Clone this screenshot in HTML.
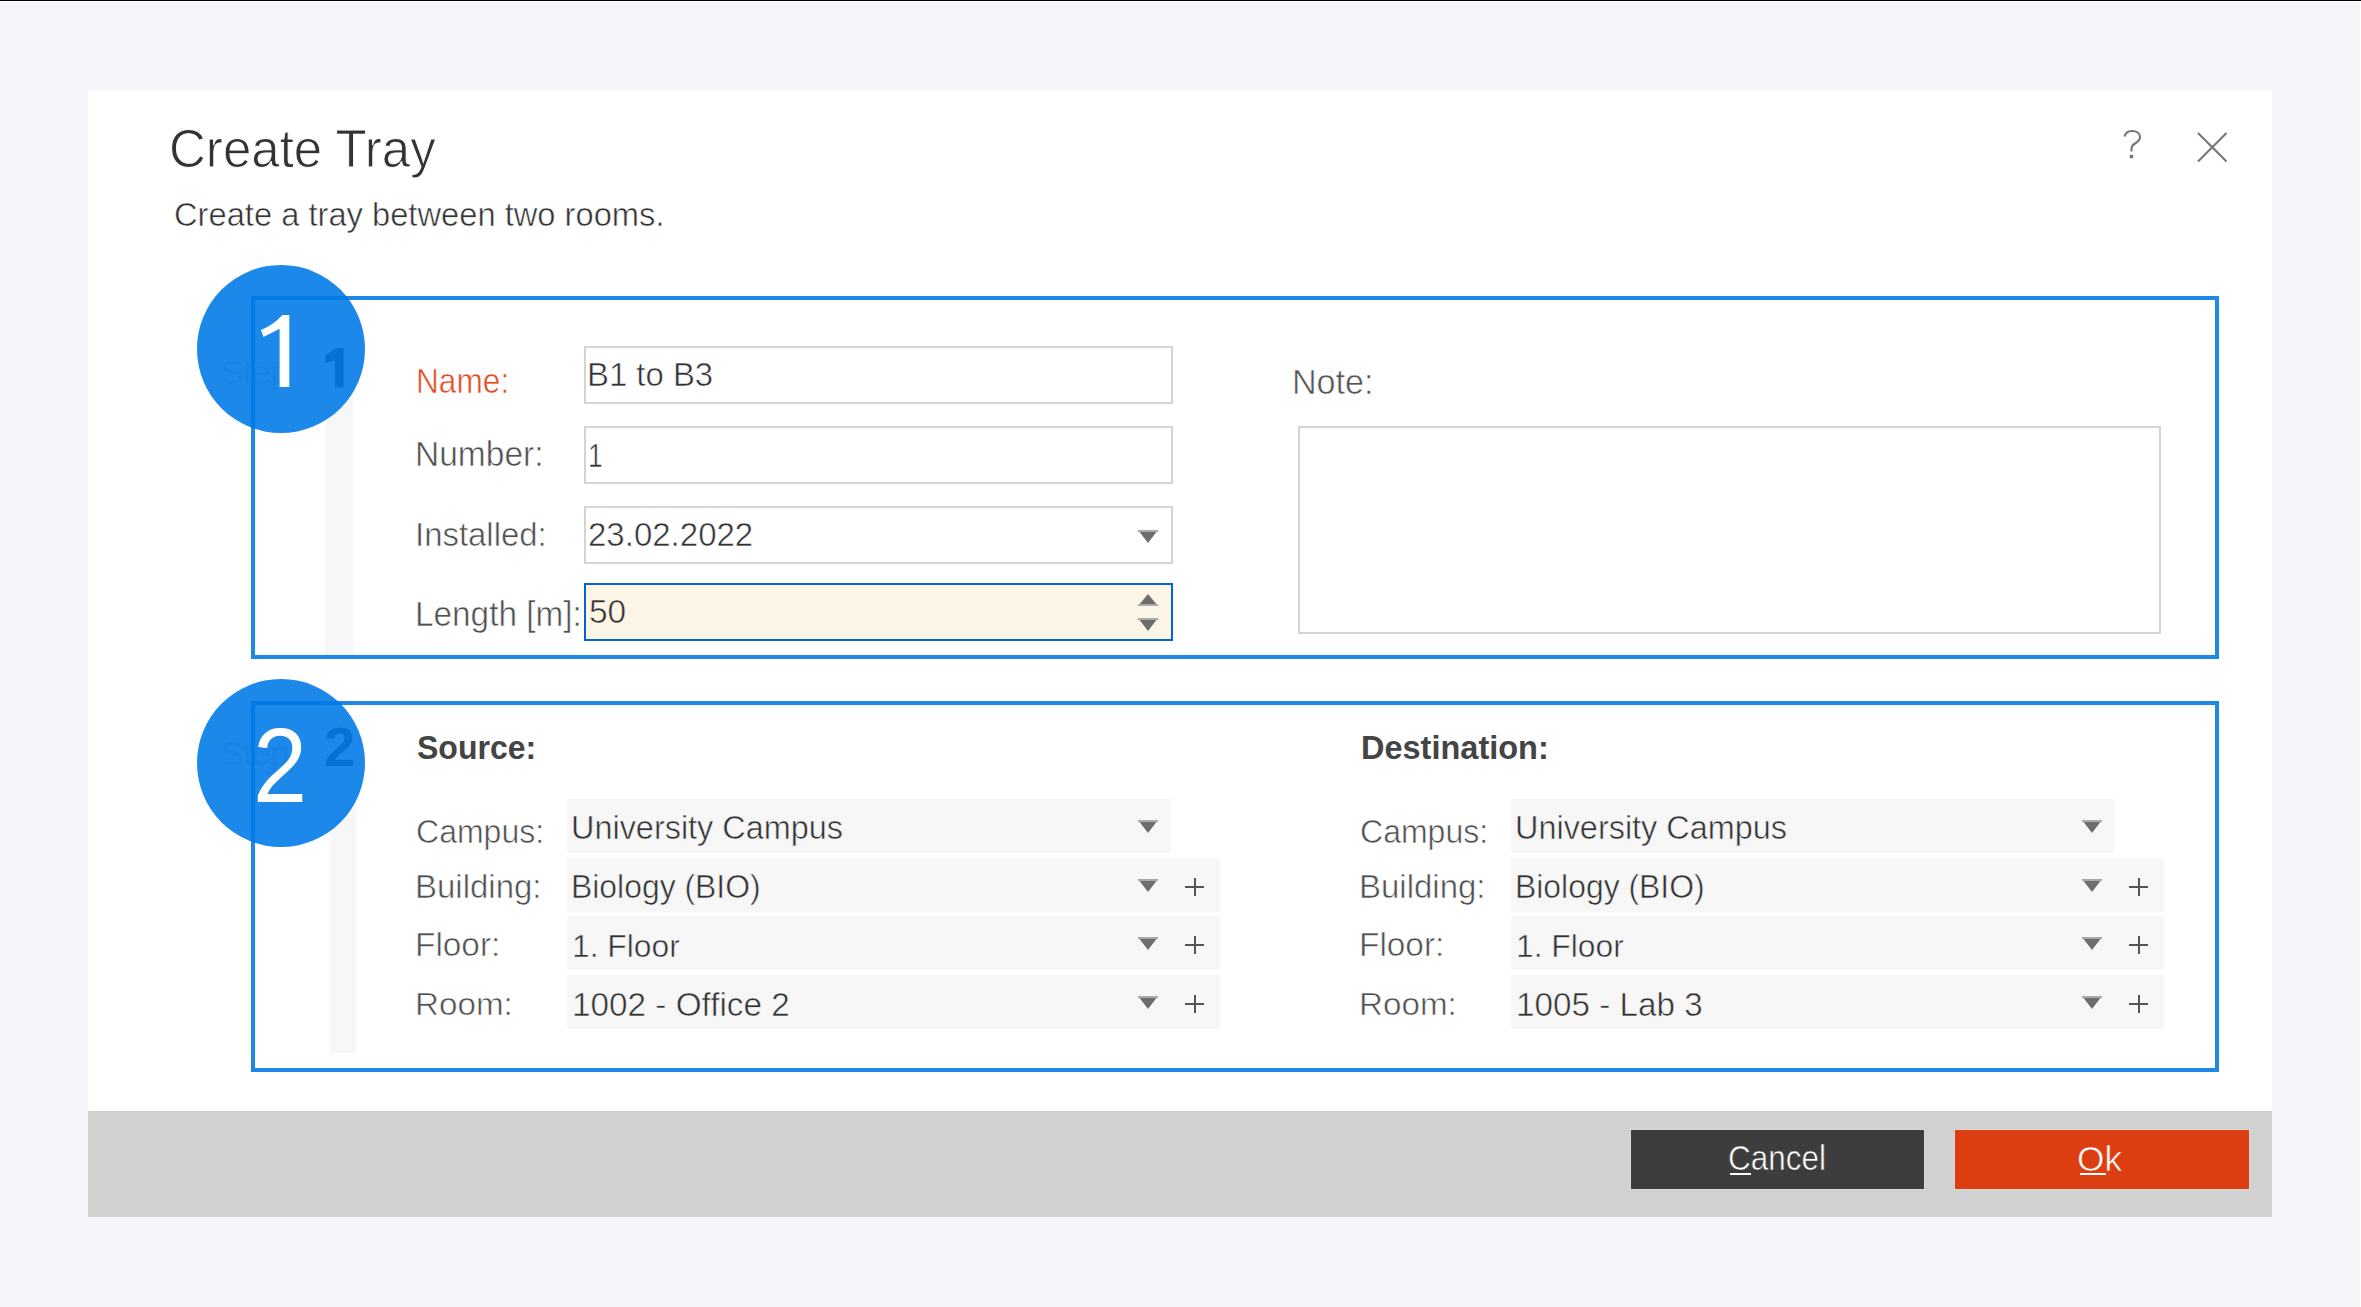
<!DOCTYPE html>
<html><head><meta charset="utf-8">
<style>
html,body{margin:0;padding:0;}
body{width:2361px;height:1307px;background:#f4f5f9;position:relative;overflow:hidden;font-family:"Liberation Sans",sans-serif;color:#333;}
.abs{position:absolute;}
.t{position:absolute;white-space:nowrap;line-height:1;transform-origin:0 0;}
.t u{text-decoration-thickness:2px;text-underline-offset:3px;}
#topline{left:0;top:0;width:2361px;height:1px;background:#000;}
#rightcol{left:2360px;top:1px;width:1px;height:1306px;background:#fff;}
#dlg{left:88px;top:90px;width:2184px;height:1021px;background:#fff;}
#foot{left:88px;top:1111px;width:2184px;height:106px;background:#d1d1d1;}
.inp{position:absolute;box-sizing:border-box;border:2px solid #d4d4d4;background:#fff;}
.box{position:absolute;box-sizing:border-box;border:4px solid #1e88e8;}
.bar{position:absolute;background:#f7f7f9;}
.circle{position:absolute;width:168px;height:168px;border-radius:50%;background:rgba(0,121,230,0.89);}
.dd{position:absolute;background:#f7f7f7;height:54px;}
.arrow{position:absolute;width:0;height:0;border-left:10px solid transparent;border-right:10px solid transparent;border-top:13px solid #6d6d6d;}
.arrow:before{content:'';position:absolute;left:-10px;top:-13px;width:20px;height:2px;background:#a9a9a9;}
.arrowup:after{content:'';position:absolute;left:-10px;top:10px;width:20px;height:2px;background:#a9a9a9;}
.arrowup{position:absolute;width:0;height:0;border-left:10px solid transparent;border-right:10px solid transparent;border-bottom:12px solid #6d6d6d;}
.plus{position:absolute;width:19px;height:18px;}
.plus:before{content:"";position:absolute;left:0;top:8px;width:19px;height:2px;background:#555;}
.plus:after{content:"";position:absolute;left:9px;top:0;width:2px;height:18px;background:#555;}
.btn{position:absolute;top:1130px;height:59px;}
/*MEASURE*/
</style></head>
<body>
<div id="topline" class="abs"></div>
<div id="rightcol" class="abs"></div>
<div class="abs" style="left:0;top:1px;width:2361px;height:1px;background:#fff;"></div>
<div id="dlg" class="abs"></div>
<div id="foot" class="abs"></div>

<svg class="abs" style="left:2110px;top:120px;" width="50" height="50" viewBox="2110 120 50 50"><path d="M2124.5 136.5 C2125.5 132.5 2128.5 131 2132 131 C2136.5 131 2140 133 2140 137 C2140 140.5 2137.5 142 2135 143.5 C2132.5 145 2131.5 146.5 2131.5 149 L2131.5 151.5" stroke="#757575" stroke-width="2.1" fill="none"/><rect x="2129.8" y="154.8" width="3.4" height="3.4" fill="#757575"/></svg>
<svg class="abs" style="left:2190px;top:125px;" width="45" height="45" viewBox="2190 125 45 45"><path d="M2198 133 L2226.5 161.5 M2226.5 133 L2198 161.5" stroke="#757575" stroke-width="2.1" fill="none"/></svg>

<!-- step 1 -->
<div class="bar" style="left:325px;top:392px;width:28px;height:264px;"></div>
<div class="t" style="left:221px;top:356px;font-size:33px;color:#cfcfcf;">Step</div>
<svg class="abs" style="left:0;top:0;" width="400" height="400" viewBox="0 0 400 400"><path d="M336 348 L343.7 348 L343.7 387.6 L334.8 387.6 L334.8 360.5 L325.3 363 L325.3 355.5 Z" fill="#333"/></svg>
<div class="box" style="left:251px;top:296px;width:1968px;height:363px;"></div>

<div class="inp" style="left:584px;top:346px;width:589px;height:58px;"></div>
<div class="inp" style="left:584px;top:426px;width:589px;height:58px;"></div>
<div class="inp" style="left:584px;top:506px;width:589px;height:58px;"></div>
<div class="inp" style="left:584px;top:583px;width:589px;height:58px;border-color:#0263d1;background:#fdf6e6;"></div>
<div class="arrow" style="left:1138px;top:530px;"></div>
<div class="arrowup" style="left:1138px;top:594px;"></div>
<div class="arrow" style="left:1138px;top:618px;"></div>
<div class="inp" style="left:1298px;top:426px;width:863px;height:208px;"></div>

<div class="circle" style="left:197px;top:265px;"></div>
<svg class="abs" style="left:0;top:0;" width="400" height="400" viewBox="0 0 400 400"><path d="M282.4 315 L289.3 315 L289.3 387 L279.6 387 L279.6 328.8 L263.4 337 L261 330.1 Q273.5 324.8 282.4 315 Z" fill="#fff"/></svg>

<!-- step 2 -->
<div class="bar" style="left:330px;top:770px;width:26px;height:283px;"></div>
<div class="t" style="left:221px;top:737px;font-size:33px;color:#cfcfcf;">Step</div>
<div class="t" style="left:324px;top:719px;font-size:56px;font-weight:bold;color:#333;">2</div>
<div class="box" style="left:251px;top:701px;width:1968px;height:371px;"></div>

<div class="dd" style="left:567px;top:799px;width:604px;"></div>
<div class="dd" style="left:567px;top:858px;width:653px;"></div>
<div class="dd" style="left:567px;top:916px;width:653px;"></div>
<div class="dd" style="left:567px;top:975px;width:653px;"></div>
<div class="dd" style="left:1511px;top:799px;width:603px;"></div>
<div class="dd" style="left:1511px;top:858px;width:653px;"></div>
<div class="dd" style="left:1511px;top:916px;width:653px;"></div>
<div class="dd" style="left:1511px;top:975px;width:653px;"></div>

<div class="arrow" style="left:1138px;top:820px;"></div>
<div class="arrow" style="left:1138px;top:879px;"></div>
<div class="arrow" style="left:1138px;top:937px;"></div>
<div class="arrow" style="left:1138px;top:996px;"></div>
<div class="arrow" style="left:2082px;top:820px;"></div>
<div class="arrow" style="left:2082px;top:879px;"></div>
<div class="arrow" style="left:2082px;top:937px;"></div>
<div class="arrow" style="left:2082px;top:996px;"></div>
<div class="plus" style="left:1185px;top:878px;"></div>
<div class="plus" style="left:1185px;top:936px;"></div>
<div class="plus" style="left:1185px;top:995px;"></div>
<div class="plus" style="left:2129px;top:878px;"></div>
<div class="plus" style="left:2129px;top:936px;"></div>
<div class="plus" style="left:2129px;top:995px;"></div>

<div class="circle" style="left:197px;top:679px;"></div>

<!-- footer buttons -->
<div class="btn" style="left:1631px;width:293px;background:#3d3d3d;box-shadow:0 0 0 1px #d9d9d9;"></div>
<div class="abs" style="left:1729.5px;top:1172.5px;width:21.5px;height:2.2px;background:#fff;"></div>
<div class="btn" style="left:1955px;width:294px;background:#dc3d11;box-shadow:0 0 0 1px #d9d9d9;"></div>
<div class="abs" style="left:2079.5px;top:1172.5px;width:26px;height:2.2px;background:#fff;"></div>

<div class="t" id="title" style="left:168.88px;top:122.47px;font-size:53.78px;transform:scaleX(0.9497);color:#333;font-weight:400;-webkit-text-stroke:0.9px #fff;">Create Tray</div>
<div class="t" id="sub" style="left:174.04px;top:197.69px;font-size:33.43px;transform:scaleX(0.9779);color:#333;font-weight:400;-webkit-text-stroke:0.55px #fff;">Create a tray between two rooms.</div>
<div class="t" id="name" style="left:416.19px;top:364.46px;font-size:34.88px;transform:scaleX(0.9075);color:#e34b1c;font-weight:400;-webkit-text-stroke:0.55px #fff;">Name:</div>
<div class="t" id="number" style="left:415.03px;top:437.46px;font-size:34.88px;transform:scaleX(0.9610);color:#505050;font-weight:400;-webkit-text-stroke:0.55px #fff;">Number:</div>
<div class="t" id="installed" style="left:415.04px;top:517.69px;font-size:33.43px;transform:scaleX(0.9844);color:#505050;font-weight:400;-webkit-text-stroke:0.55px #fff;">Installed:</div>
<div class="t" id="length" style="left:415.02px;top:596.58px;font-size:34.16px;transform:scaleX(0.9758);color:#505050;font-weight:400;-webkit-text-stroke:0.55px #fff;">Length [m]:</div>
<div class="t" id="note" style="left:1291.95px;top:364.58px;font-size:34.16px;transform:scaleX(1.0000);color:#555;font-weight:400;-webkit-text-stroke:0.55px #fff;">Note:</div>
<div class="t" id="v_b1" style="left:587.04px;top:358.29px;font-size:33.43px;transform:scaleX(0.9839);color:#333;font-weight:400;-webkit-text-stroke:0.55px #fff;">B1 to B3</div>
<div class="t" id="v_1" style="left:588.25px;top:438.69px;font-size:33.43px;transform:scaleX(0.7917);color:#333;font-weight:400;-webkit-text-stroke:0.55px #fff;">1</div>
<div class="t" id="v_date" style="left:588.02px;top:517.69px;font-size:33.43px;transform:scaleX(0.9878);color:#333;font-weight:400;-webkit-text-stroke:0.55px #fff;">23.02.2022</div>
<div class="t" id="v_50" style="left:588.99px;top:595.19px;font-size:33.43px;transform:scaleX(1.0000);color:#333;font-weight:400;-webkit-text-stroke:0.55px #fdf6e6;">50</div>
<div class="t" id="source" style="left:417.04px;top:730.69px;font-size:33.43px;transform:scaleX(0.9583);color:#444;font-weight:700;">Source:</div>
<div class="t" id="dest" style="left:1361.05px;top:730.69px;font-size:33.43px;transform:scaleX(0.9724);color:#444;font-weight:700;">Destination:</div>
<div class="t" id="campus" style="left:416.08px;top:815.83px;font-size:32.56px;transform:scaleX(0.9840);color:#505050;font-weight:400;-webkit-text-stroke:0.55px #fff;">Campus:</div>
<div class="t" id="building" style="left:415.02px;top:869.76px;font-size:32.99px;transform:scaleX(1.0001);color:#505050;font-weight:400;-webkit-text-stroke:0.55px #fff;">Building:</div>
<div class="t" id="floor" style="left:414.98px;top:928.81px;font-size:32.70px;transform:scaleX(1.0207);color:#505050;font-weight:400;-webkit-text-stroke:0.55px #fff;">Floor:</div>
<div class="t" id="room" style="left:414.97px;top:987.60px;font-size:32.12px;transform:scaleX(1.0338);color:#505050;font-weight:400;-webkit-text-stroke:0.55px #fff;">Room:</div>
<div class="t" id="campus2" style="left:1360.08px;top:815.83px;font-size:32.56px;transform:scaleX(0.9840);color:#505050;font-weight:400;-webkit-text-stroke:0.55px #fff;">Campus:</div>
<div class="t" id="building2" style="left:1359.02px;top:869.76px;font-size:32.99px;transform:scaleX(1.0001);color:#505050;font-weight:400;-webkit-text-stroke:0.55px #fff;">Building:</div>
<div class="t" id="floor2" style="left:1358.98px;top:928.81px;font-size:32.70px;transform:scaleX(1.0207);color:#505050;font-weight:400;-webkit-text-stroke:0.55px #fff;">Floor:</div>
<div class="t" id="room2" style="left:1358.97px;top:987.60px;font-size:32.12px;transform:scaleX(1.0338);color:#505050;font-weight:400;-webkit-text-stroke:0.55px #fff;">Room:</div>
<div class="t" id="univ" style="left:571.08px;top:811.22px;font-size:33.28px;transform:scaleX(0.9746);color:#333;font-weight:400;-webkit-text-stroke:0.55px #f7f7f7;">University Campus</div>
<div class="t" id="bio" style="left:571.12px;top:869.74px;font-size:33.14px;transform:scaleX(0.9625);color:#333;font-weight:400;-webkit-text-stroke:0.55px #f7f7f7;">Biology (BIO)</div>
<div class="t" id="floorv" style="left:572.48px;top:929.63px;font-size:31.98px;transform:scaleX(0.9946);color:#333;font-weight:400;-webkit-text-stroke:0.55px #f7f7f7;">1. Floor</div>
<div class="t" id="roomv" style="left:572.40px;top:987.52px;font-size:33.28px;transform:scaleX(1.0010);color:#333;font-weight:400;-webkit-text-stroke:0.55px #f7f7f7;">1002 - Office 2</div>
<div class="t" id="univ2" style="left:1515.08px;top:811.22px;font-size:33.28px;transform:scaleX(0.9746);color:#333;font-weight:400;-webkit-text-stroke:0.55px #f7f7f7;">University Campus</div>
<div class="t" id="bio2" style="left:1515.12px;top:869.74px;font-size:33.14px;transform:scaleX(0.9625);color:#333;font-weight:400;-webkit-text-stroke:0.55px #f7f7f7;">Biology (BIO)</div>
<div class="t" id="floorv2" style="left:1516.48px;top:929.63px;font-size:31.98px;transform:scaleX(0.9946);color:#333;font-weight:400;-webkit-text-stroke:0.55px #f7f7f7;">1. Floor</div>
<div class="t" id="roomv2" style="left:1516.40px;top:987.52px;font-size:33.28px;transform:scaleX(0.9990);color:#333;font-weight:400;-webkit-text-stroke:0.55px #f7f7f7;">1005 - Lab 3</div>
<div class="t" id="cancel" style="left:1728.11px;top:1141.46px;font-size:34.88px;transform:scaleX(0.9020);color:#fff;font-weight:400;-webkit-text-stroke:0.6px #3d3d3d;">Cancel</div>
<div class="t" id="ok" style="left:2077.39px;top:1141.83px;font-size:34.45px;transform:scaleX(1.0244);color:#fff;font-weight:400;-webkit-text-stroke:0.6px #dc3d11;">Ok</div>
<div class="t" id="c2" style="left:252.60px;top:712.16px;font-size:106.10px;transform:scaleX(0.9171);color:#fff;font-weight:400;">2</div>
</body></html>
